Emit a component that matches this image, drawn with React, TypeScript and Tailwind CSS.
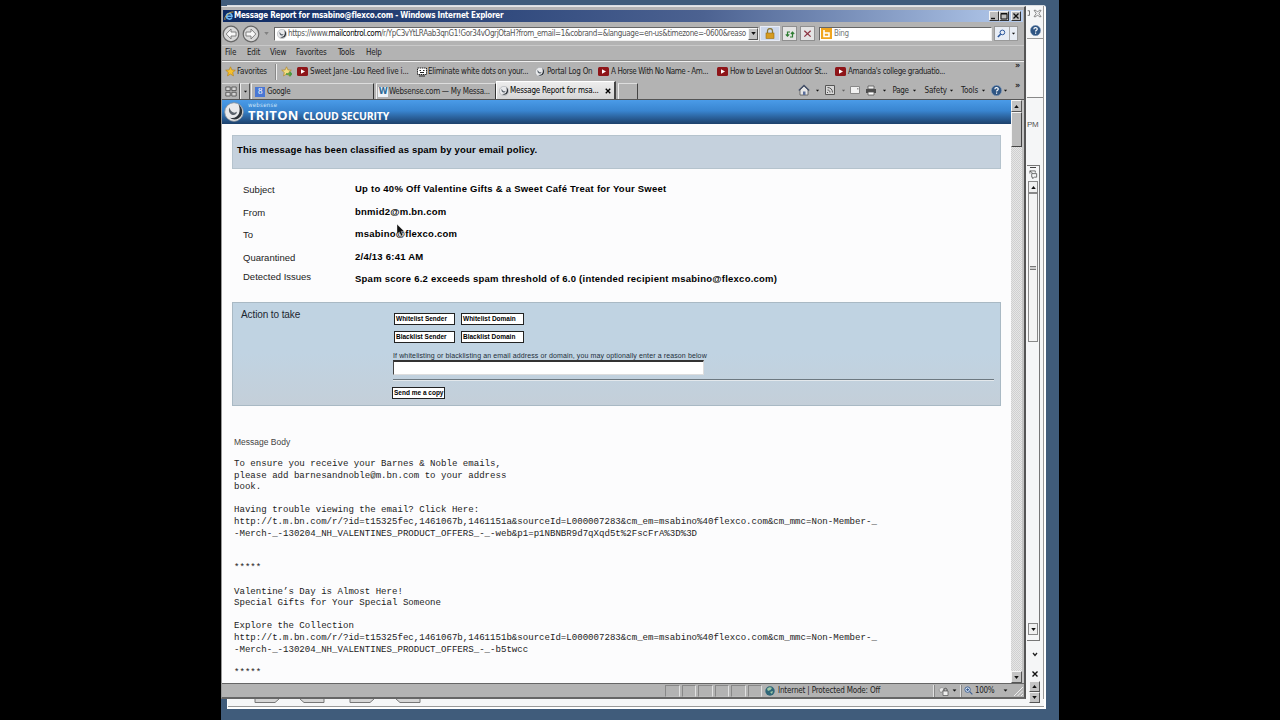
import type { ReactNode } from 'react'
import clsx from 'clsx'

const BODY_LINES = [
  'To ensure you receive your Barnes & Noble emails,',
  'please add barnesandnoble@m.bn.com to your address',
  'book.',
  '',
  'Having trouble viewing the email? Click Here:',
  'http://t.m.bn.com/r/?id=t15325fec,1461067b,1461151a&sourceId=L000007283&cm_em=msabino%40flexco.com&cm_mmc=Non-Member-_',
  '-Merch-_-130204_NH_VALENTINES_PRODUCT_OFFERS_-_-web&p1=p1NBNBR9d7qXqd5t%2FscFrA%3D%3D',
  '',
  '',
  '*****',
  '',
  'Valentine’s Day is Almost Here!',
  'Special Gifts for Your Special Someone',
  '',
  'Explore the Collection',
  'http://t.m.bn.com/r/?id=t15325fec,1461067b,1461151b&sourceId=L000007283&cm_em=msabino%40flexco.com&cm_mmc=Non-Member-_',
  '-Merch-_-130204_NH_VALENTINES_PRODUCT_OFFERS_-_-b5twcc',
  '',
  '*****',
]

function Caret({ className, up }: { className?: string; up?: boolean }) {
  return (
    <svg viewBox="0 0 6 4" className={clsx('h-[3px] w-[5px] shrink-0', className)}>
      <path d={up ? 'M0 4h6L3 0z' : 'M0 0h6L3 4z'} fill="#111" />
    </svg>
  )
}

function Swirl({ className }: { className?: string }) {
  return (
    <svg viewBox="0 0 20 20" className={clsx('shrink-0', className)}>
      <circle cx="10" cy="10" r="9.3" fill="#e9eaec" stroke="#8b9096" strokeWidth="0.8" />
      <path d="M14.5 2.5C18 5 19 9 17.5 13c-2 4.5-8 6-12 2.5 4 1.5 8-.5 9.5-4 1-3 .8-6-.5-9z" fill="#2d3339" />
      <path d="M5.5 5.5c-1.5 3 0 6.5 3 7.5 2.5.5 4.5-1 4.5-3.5-1 1.5-3 1.5-4.5.5S6 7.5 5.5 5.5z" fill="#5b636c" />
    </svg>
  )
}

function YouTube() {
  return (
    <svg viewBox="0 0 11 9" className="h-[9px] w-[11px] shrink-0">
      <rect width="11" height="9" rx="1.5" fill="#8e1519" />
      <path d="M4 2.2v4.6L8 4.5z" fill="#fff" />
    </svg>
  )
}

function HelpBall({ className }: { className?: string }) {
  return (
    <svg viewBox="0 0 12 12" className={clsx('shrink-0', className)}>
      <circle cx="6" cy="6" r="5.6" fill="#2f5583" stroke="#8fa6c0" strokeWidth="0.6" />
      <path d="M4.2 4.7c0-2.6 3.7-2.4 3.7-.3 0 1.4-1.8 1.4-1.8 2.8M6.1 8.3v1.2" fill="none" stroke="#fff" strokeWidth="1.3" />
    </svg>
  )
}

function WinButton({ children }: { children: ReactNode }) {
  return (
    <span className="flex h-[10px] w-[10px] items-center justify-center border border-t-[#f4f4f4] border-r-[#333] border-b-[#333] border-l-[#f4f4f4] bg-[#bdbdbd]">
      <svg viewBox="0 0 8 8" className="size-[8px]" fill="none" stroke="#111">
        {children}
      </svg>
    </span>
  )
}

function ScrollButton({ up, className }: { up?: boolean; className?: string }) {
  return (
    <div
      className={clsx(
        'flex shrink-0 items-center justify-center border border-t-[#f5f5f5] border-r-[#555] border-b-[#555] border-l-[#f5f5f5] bg-[#c4c4c4]',
        className,
      )}
    >
      <Caret up={up} />
    </div>
  )
}

function TitleBar() {
  return (
    <div className="mx-px flex h-[12px] shrink-0 items-center bg-linear-to-r from-[#0d2a63] from-0% via-[#4c6291] via-60% to-[#b5cbed] pl-px">
      <svg viewBox="0 0 10 10" className="size-[10px] shrink-0">
        <path d="M8 6.5C7 9 2.5 8.5 2.5 5.3 2.5 1.8 8 1.5 8 5.2H3" fill="none" stroke="#6db8f2" strokeWidth="1.6" />
        <path d="M1 9C-.5 6 5 .5 9.5 1" fill="none" stroke="#e9b640" strokeWidth="0.8" />
      </svg>
      <span className="flex-1 text-[8px] font-bold tracking-[-0.23px] text-white">
        Message Report for msabino@flexco.com - Windows Internet Explorer
      </span>
      <div className="flex pr-[2px]">
        <WinButton>
          <path d="M1 6.5h4" strokeWidth="1.4" />
        </WinButton>
        <WinButton>
          <path d="M1 1.5h6v5.5H1zM1 2h6" />
        </WinButton>
        <span className="w-[2px]" />
        <WinButton>
          <path d="M1.5 1.5l5 5M6.5 1.5l-5 5" strokeWidth="1.3" />
        </WinButton>
      </div>
    </div>
  )
}

function NavArrow({ flip }: { flip?: boolean }) {
  return (
    <svg viewBox="0 0 18 18" className={clsx('size-[18px] shrink-0', flip && '-scale-x-100')}>
      <circle cx="9" cy="9" r="7.8" fill="#d9d9d9" stroke="#666" strokeWidth="1.2" />
      <path d="M9 4L4.2 9 9 14v-3h5V7H9z" fill="#f8f8f8" stroke="#777" strokeWidth="0.9" />
    </svg>
  )
}

function AddressBar() {
  return (
    <div className="flex h-[23px] shrink-0 items-center">
      <NavArrow />
      <span className="w-[2px]" />
      <NavArrow flip />
      <Caret className="mr-[5px] ml-[4px] opacity-30" />
      <div className="flex h-[14px] w-[485px] items-center border border-t-[#666] border-r-[#eee] border-b-[#eee] border-l-[#666] bg-white pl-[2px]">
        <Swirl className="size-[10px]" />
        <span className="ml-px w-[460px] text-[8px] tracking-[-0.37px] whitespace-nowrap text-[#555]">
          https://www.<span className="text-black">mailcontrol.com</span>
          /r/YpC3vYtLRAab3qnG1!Gor34vOgrjOtaH?from_email=1&amp;cobrand=&amp;language=en-us&amp;timezone=-0600&amp;reaso
        </span>
        <ScrollButton className="h-[12px] w-[10px]" />
      </div>
      <div className="ml-px flex h-[15px] w-[20px] items-center justify-center border border-[#e8ecf5] bg-[#cdd8ec]">
        <svg viewBox="0 0 10 11" className="h-[11px] w-[10px]">
          <path d="M2.5 5V3a2.5 2.5 0 015 0v2" fill="none" stroke="#8a7a3c" strokeWidth="1.3" />
          <rect x="1" y="5" width="8" height="5.5" fill="#d59b22" stroke="#9c6d10" strokeWidth="0.6" />
        </svg>
      </div>
      <div className="ml-[2px] flex h-[15px] w-[15px] items-center justify-center border border-[#8f8f8f] bg-[#e4e4e4]">
        <svg viewBox="0 0 10 10" className="size-[10px]" fill="none" stroke="#2e7d32" strokeWidth="1.2">
          <path d="M5 3H2.5v4M.8 5.3L2.5 7.2 4.2 5.3M5 8h2.5V3.5M5.9 5L7.5 3.2 9.2 5" />
        </svg>
      </div>
      <div className="ml-[3px] flex h-[15px] w-[15px] items-center justify-center border border-[#8f8f8f] bg-[#e4e4e4]">
        <svg viewBox="0 0 10 10" className="size-[9px]" fill="none" stroke="#8c3340" strokeWidth="1.4">
          <path d="M1.5 2l7 6.5M8.5 2L1.5 8.5" />
        </svg>
      </div>
      <div className="ml-[4px] flex h-[14px] w-[173px] items-center border border-t-[#666] border-r-[#eee] border-b-[#eee] border-l-[#666] bg-white pl-px">
        <svg viewBox="0 0 11 11" className="size-[11px]">
          <rect width="11" height="11" fill="#f0a51e" />
          <path d="M3 2v6.5h5V5H3.5" fill="none" stroke="#fff" strokeWidth="1.6" />
        </svg>
        <span className="ml-[2px] text-[8px] tracking-[-0.3px] text-[#777]">Bing</span>
      </div>
      <div className="ml-[2px] flex h-[15px] w-[24px] items-center border border-[#999] bg-[#e8edf5]">
        <svg viewBox="0 0 10 10" className="ml-[2px] size-[9px]" fill="none" stroke="#28559b">
          <circle cx="6" cy="3.8" r="2.6" strokeWidth="1.1" />
          <path d="M4 5.8L1 9" strokeWidth="1.7" />
        </svg>
        <span className="ml-[3px] flex h-full flex-1 items-center justify-center border-l border-[#aaa]">
          <Caret className="scale-75" />
        </span>
      </div>
    </div>
  )
}

function MenuBar() {
  return (
    <div className="flex h-[16px] shrink-0 items-center border-t border-b border-t-[#c9c9c9] border-b-[#888] pl-[3px] text-[8px] tracking-[-0.22px] text-[#222]">
      <span className="w-[22px]">File</span>
      <span className="w-[23px]">Edit</span>
      <span className="w-[26px]">View</span>
      <span className="w-[42px]">Favorites</span>
      <span className="w-[28px]">Tools</span>
      <span>Help</span>
    </div>
  )
}

function Star({ add }: { add?: boolean }) {
  return (
    <svg viewBox="0 0 11 11" className="size-[11px] shrink-0">
      <path
        d="M5.5.8l1.4 3.1 3.4.3-2.6 2.3.8 3.4-3-1.8-3 1.8.8-3.4L.7 4.2l3.4-.3z"
        fill={add ? '#f1dd83' : '#f6c02e'}
        stroke="#b07c14"
        strokeWidth="0.6"
      />
      {add && <path d="M5 8h5M8.5 5.8L10.5 8 8.5 10.2" fill="none" stroke="#4b9a3c" strokeWidth="1.4" />}
    </svg>
  )
}

function FavoritesBar() {
  return (
    <div className="flex h-[20px] shrink-0 items-center border-t border-[#f0f0f0] pl-[3px] text-[8px] tracking-[-0.3px] whitespace-nowrap text-[#222]">
      <Star />
      <span className="ml-px w-[38px]">Favorites</span>
      <span className="mr-[4px] h-[16px] w-[2px] border-l border-[#888] bg-[#eee]" />
      <span className="flex w-[16px]">
        <Star add />
      </span>
      <YouTube />
      <span className="ml-[2px] w-[106px] tracking-[-0.18px]">Sweet Jane -Lou Reed live i...</span>
      <svg viewBox="0 0 12 10" className="h-[10px] w-[12px] shrink-0">
        <rect x="1.5" y="1" width="9" height="6.5" fill="#fff" stroke="#222" strokeDasharray="1.5 0.7" />
        <path d="M3.5 3.5h1.5M7 3.5h1.5M4 5.5h4M3 9h6" stroke="#222" />
      </svg>
      <span className="w-[107px]">Eliminate white dots on your...</span>
      <Swirl className="size-[10px]" />
      <span className="ml-[2px] w-[51px] tracking-[-0.22px]">Portal Log On</span>
      <YouTube />
      <span className="ml-[2px] w-[106px] tracking-[-0.4px]">A Horse With No Name - Am...</span>
      <YouTube />
      <span className="ml-[2px] w-[105px]">How to Level an Outdoor St...</span>
      <YouTube />
      <span className="ml-[2px] flex-1 tracking-[-0.36px]">Amanda's college graduatio...</span>
      <span className="mb-[11px] pr-[4px] text-[9px] font-bold">»</span>
    </div>
  )
}

function TabStrip() {
  return (
    <div className="flex h-[19px] shrink-0 items-end border-b border-[#555] text-[8px] tracking-[-0.35px] whitespace-nowrap text-[#222]">
      <div className="flex h-[16px] w-[18px] items-center justify-center border-t border-r border-t-[#ddd] border-r-[#555]">
        <svg viewBox="0 0 12 11" className="h-[11px] w-[12px]" fill="#d5d5d5" stroke="#555" strokeWidth="0.9">
          <path d="M.8 1h4.4v3.6H.8zM6.8 1h4.4v3.6H6.8zM.8 6.3h4.4V10H.8zM6.8 6.3h4.4V10H6.8z" />
        </svg>
      </div>
      <div className="flex h-[16px] w-[10px] items-center justify-center border-t border-r border-l border-t-[#ddd] border-r-[#555] border-l-[#eee]">
        <Caret className="scale-75" />
      </div>
      <div className="ml-px flex h-[16px] w-[123px] items-center border-t border-r border-l border-t-[#ddd] border-r-[#333] border-l-[#eee] pl-[3px]">
        <span className="flex size-[10px] items-center justify-center bg-[#4a77d4] font-['Liberation_Serif'] text-[9px] text-white">8</span>
        <span className="ml-[2px]">Google</span>
      </div>
      <div className="ml-[2px] flex h-[16px] w-[120px] items-center border-t border-r border-l border-t-[#ddd] border-r-[#333] border-l-[#eee] pl-px">
        <span className="flex size-[10px] items-center justify-center bg-[#eef3f8] text-[9px] font-bold text-[#2c6a96]">W</span>
        <span className="ml-px tracking-[-0.28px]">Websense.com — My Messa...</span>
      </div>
      <div className="flex h-[18px] w-[120px] items-center border-t border-r-2 border-l border-t-white border-r-[#444] border-l-white bg-linear-to-b from-[#ededed] to-[#d6d6d6] pt-px pl-[2px] text-black">
        <Swirl className="size-[10px]" />
        <span className="ml-px flex-1 tracking-[-0.22px]">Message Report for msa...</span>
        <svg viewBox="0 0 8 8" className="mr-[3px] size-[6px]" stroke="#000" strokeWidth="1.8">
          <path d="M1 1l6 6M7 1L1 7" />
        </svg>
      </div>
      <div className="ml-[2px] h-[16px] w-[20px] border-t border-r border-l border-t-[#ddd] border-r-[#444] border-l-[#eee]" />
      <div className="flex h-full flex-1 items-center justify-end pr-[4px]">
        <svg viewBox="0 0 12 12" className="size-[12px]">
          <path d="M2 6v5h8V6L6 2z" fill="#e6e6e6" stroke="#555" strokeWidth="0.8" />
          <path d="M.8 6.5L6 1.5l5.2 5" fill="none" stroke="#44506a" strokeWidth="1.3" />
          <path d="M5 7.5h2.5V11H5z" fill="#5b6e9a" />
        </svg>
        <Caret className="ml-[5px] scale-75" />
        <svg viewBox="0 0 10 10" className="ml-[5px] size-[10px]" fill="none" stroke="#555">
          <path d="M.5.5h9v9h-9z" fill="#d8d8d8" />
          <path d="M2.5 5c1.500 0 2.500 1 2.500 2.500M2.500 2.500c3 0 5 2 5 5" />
          <path d="M2 7h1v1H2z" fill="#555" stroke="none" />
        </svg>
        <Caret className="ml-[6px] scale-75 opacity-50" />
        <svg viewBox="0 0 10 8" className="ml-[4px] h-[8px] w-[10px]">
          <path d="M.5.5h9v7h-9z" fill="#f1f1f1" stroke="#888" />
          <path d="M7 2h1.5v1.5H7z" fill="#999" />
        </svg>
        <svg viewBox="0 0 12 11" className="ml-[5px] h-[11px] w-[12px]">
          <path d="M3 1h6v3H3z" fill="#eee" stroke="#555" strokeWidth="0.8" />
          <path d="M1 4h10v4H1z" fill="#4d4d4d" />
          <path d="M3 7h6v3H3z" fill="#fff" stroke="#555" strokeWidth="0.8" />
        </svg>
        <Caret className="ml-[5px] scale-75" />
        <span className="ml-[6px] pt-px">Page</span>
        <Caret className="ml-[3px] scale-75" />
        <span className="ml-[8px] pt-px tracking-[-0.1px]">Safety</span>
        <Caret className="ml-[2px] scale-75" />
        <span className="ml-[7px] pt-px tracking-[-0.1px]">Tools</span>
        <Caret className="ml-[3px] scale-75" />
        <HelpBall className="ml-[5px] size-[11px]" />
        <Caret className="ml-px scale-75" />
        <span className="mb-[9px] ml-[7px] text-[9px] font-bold">»</span>
      </div>
    </div>
  )
}

function Brand() {
  return (
    <div className="flex h-[24px] shrink-0 items-center bg-linear-to-b from-[#4a9be8] from-0% via-[#3985d0] via-45% to-[#1d416c] pl-[2px] text-white">
      <Swirl className="size-[20px]" />
      <div className="ml-[4px] flex flex-col">
        <span className="h-[6px] text-[6px] leading-[6px] tracking-[0.3px] text-[#cfe4f8]">websense</span>
        <div className="flex items-baseline leading-[14px] font-bold">
          <span className="font-['Open_Sans'] text-[13px] tracking-[0.3px]">TRITON</span>
          <span className="ml-[4px] font-['Open_Sans'] text-[10.5px] tracking-[-0.16px]">CLOUD SECURITY</span>
        </div>
      </div>
    </div>
  )
}

function Field({ label, value, className }: { label: string; value: string; className?: string }) {
  return (
    <div className="flex h-[22.5px] shrink-0">
      <span className={clsx('w-[112px] text-[#222]', className)}>{label}</span>
      <span className="-mt-px font-bold tracking-[0.24px] text-black">{value}</span>
    </div>
  )
}

function ActionButton({ children, className }: { children: ReactNode; className: string }) {
  return (
    <button
      className={clsx(
        "flex h-[12px] items-center border border-[#222] bg-white pl-px font-['Liberation_Sans'] text-[6.5px] font-bold whitespace-nowrap text-black",
        className,
      )}
    >
      {children}
    </button>
  )
}

function ActionPanel() {
  return (
    <div className="flex h-[104px] shrink-0 border border-[#a9b9c4] bg-linear-to-b from-[#c0d3e2] from-50% to-[#c4cfd9]">
      <span className="w-[160px] pt-[6px] pl-[8px] text-[10px] leading-[12px] tracking-[-0.1px] text-[#1c2630]">Action to take</span>
      <div className="flex flex-1 flex-col pt-[10px] pr-[6px]">
        <div className="ml-px grid grid-cols-[61px_64px] gap-x-[6px] gap-y-[6px]">
          <ActionButton className="w-[61px]">Whitelist Sender</ActionButton>
          <ActionButton className="w-[63px]">Whitelist Domain</ActionButton>
          <ActionButton className="w-[61px]">Blacklist Sender</ActionButton>
          <ActionButton className="w-[63px]">Blacklist Domain</ActionButton>
        </div>
        <span className="mt-[9px] h-[8px] text-[7px] leading-[8px] tracking-[0.12px] whitespace-nowrap text-[#222e3a]">
          If whitelisting or blacklisting an email address or domain, you may optionally enter a reason below
        </span>
        <div className="h-[15px] w-[311px] border-t-2 border-r border-b border-l border-t-[#333] border-r-[#ddd] border-b-[#ddd] border-l-[#444] bg-white" />
        <div className="mt-[4px] h-[2px] border-t border-[#6d7880] bg-[#e3e8ec]" />
        <ActionButton className="mt-[6px] -ml-px w-[53px]">Send me a copy</ActionButton>
      </div>
    </div>
  )
}

function Page() {
  return (
    <div className="flex h-full flex-1 flex-col overflow-hidden bg-[#fcfcfd]">
      <Brand />
      <div className="flex flex-col pt-[11px] pr-[10px] pl-[10px] font-['Liberation_Sans']">
        <div className="flex h-[34px] shrink-0 items-center border border-[#b5c3cd] bg-[#c5d1dd] pb-[3px] pl-[4px] text-[9.5px] font-bold tracking-[0.18px] text-black">
          This message has been classified as spam by your email policy.
        </div>
        <div className="flex h-[133px] shrink-0 flex-col pt-[14px] pl-[11px] text-[9.5px] leading-[13px]">
          <Field label="Subject" value="Up to 40% Off Valentine Gifts & a Sweet Café Treat for Your Sweet" />
          <Field label="From" value="bnmid2@m.bn.com" />
          <Field label="To" value="msabino@flexco.com" />
          <Field label="Quarantined" value="2/4/13 6:41 AM" />
          <Field
            label="Detected Issues"
            value="Spam score 6.2 exceeds spam threshold of 6.0 (intended recipient msabino@flexco.com)"
            className="-mt-[3px]"
          />
        </div>
        <ActionPanel />
        <span className="mt-[30px] pl-[2px] text-[8.5px] leading-[12px] text-[#444]">Message Body</span>
        <div className="mt-[10px] flex flex-col pl-[2px] font-['Liberation_Mono'] text-[9.08px] text-[#222]">
          {BODY_LINES.map((line, i) => (
            <span key={i} className="h-[11.6px] leading-[11.6px] whitespace-pre">
              {line}
            </span>
          ))}
        </div>
      </div>
    </div>
  )
}

function PageScroll() {
  return (
    <div className="flex w-[11px] shrink-0 flex-col bg-[repeating-conic-gradient(#d0d0d0_0_25%,#e6e6e6_0_50%)] bg-[length:2px_2px]">
      <ScrollButton up className="h-[12px]" />
      <div className="h-[35px] border border-t-[#f5f5f5] border-r-[#444] border-b-[#444] border-l-[#f5f5f5] bg-[#bcbcbc]" />
      <div className="flex-1" />
      <ScrollButton className="h-[12px]" />
    </div>
  )
}

function StatusBar() {
  return (
    <div className="flex h-[14px] shrink-0 items-center border-t border-[#666] pl-px text-[8px] tracking-[-0.35px] text-[#222]">
      <div className="flex-1" />
      {[0, 1, 2, 3, 4, 5].map((n) => (
        <span key={n} className="mr-[2px] h-[12px] w-[14.5px] border border-t-[#888] border-r-[#e2e2e2] border-b-[#bbb] border-l-[#888]" />
      ))}
      <div className="flex h-[12px] w-[170px] items-center border-r border-[#e2e2e2] pl-px">
        <svg viewBox="0 0 10 10" className="size-[10px]">
          <circle cx="5" cy="5" r="4.7" fill="#2e6678" />
          <path d="M2 3c1-2 4-2 5-1L5.5 4 3 5zM5 6l3-1-1 3z" fill="#9fc9a8" />
        </svg>
        <span className="ml-[3px] tracking-[-0.17px]">Internet | Protected Mode: Off</span>
      </div>
      <div className="flex h-[12px] w-[27px] items-center border-r border-l border-r-[#e2e2e2] border-l-[#888] pl-[3px]">
        <svg viewBox="0 0 11 10" className="h-[10px] w-[11px]">
          <path d="M1 4c1-3 4-3 5-1L3 7z" fill="#e8e8e8" stroke="#777" strokeWidth="0.6" />
          <path d="M5 5h5v4.5H5z" fill="#eee" stroke="#555" strokeWidth="0.7" />
          <path d="M6 5V3.5c0-1.6 3-1.6 3 0V5" fill="none" stroke="#555" />
        </svg>
        <Caret className="ml-[3px] scale-90" />
      </div>
      <div className="flex h-[12px] w-[52px] items-center border-l border-[#888] pl-[2px]">
        <svg viewBox="0 0 10 10" className="size-[9px]" fill="none" stroke="#3a5d92">
          <circle cx="4" cy="4" r="3" fill="#dfe9f5" />
          <path d="M2.5 4h3M4 2.5v3M6.3 6.3L9.3 9.3" strokeWidth="1.2" />
        </svg>
        <span className="ml-[2px] w-[28px]">100%</span>
        <Caret className="scale-90" />
      </div>
      <svg viewBox="0 0 10 10" className="mr-px size-[10px]" stroke="#eee">
        <path d="M1 10l9-9M4.5 10L10 4.5M8 10l2-2" />
      </svg>
    </div>
  )
}

function BrowserWindow() {
  return (
    <div className="absolute top-[6px] left-[221px] flex h-[693px] w-[805px] flex-col border-t border-r-2 border-b-2 border-l border-t-[#e6e6e6] border-r-[#555] border-b-[#666] border-l-[#999] bg-[#b3b3b3] pt-[3px] font-['DejaVu_Sans_Condensed','DejaVu_Sans',sans-serif]">
      <TitleBar />
      <AddressBar />
      <MenuBar />
      <FavoritesBar />
      <TabStrip />
      <div className="flex h-[583px] shrink-0 border-r-2 border-[#c4c4c4]">
        <Page />
        <PageScroll />
      </div>
      <StatusBar />
    </div>
  )
}

function MailWindow() {
  return (
    <div className="absolute top-[5px] left-[227px] flex h-[704px] w-[819px] flex-col items-end rounded-tr-[3px] border border-t-[#d9dde2] border-r-2 border-r-white border-b-2 border-b-white border-l-white bg-[#f5f6f7]">
      <div className="flex min-h-0 w-[18px] flex-1 flex-col border-r border-[#999] pl-px">
        <div className="flex h-[33px] shrink-0 flex-col border-b border-[#999]">
          <svg viewBox="0 0 16 12" className="mt-[2px] h-[11px] w-[16px]" fill="none" stroke="#666">
            <path d="M0 3h2v5H0" />
            <path d="M7 2.5h2l1.8 2 1.8-2h2L12.3 6l2.3 3.5h-2l-1.8-2-1.8 2H7L9.3 6z" strokeWidth="0.8" />
          </svg>
          <HelpBall className="mt-[6px] ml-[3px] size-[11px]" />
        </div>
        <div className="h-[59px] shrink-0 border-b border-[#888] bg-[#fafafa]" />
        <span className="h-[67px] shrink-0 pt-[21px] font-['Liberation_Sans'] text-[8px] tracking-[-0.3px] text-[#555]">PM</span>
        <div className="flex h-[476px] w-[13px] shrink-0 flex-col items-center border-t border-r border-b border-[#777]">
          <div className="mt-px h-px w-[6px] bg-[#444]" />
          <svg viewBox="0 0 10 10" className="my-[2px] size-[9px]" fill="none" stroke="#555" strokeWidth="0.9">
            <path d="M1 4V1h6v2M1 1l3 2.5M3 4h5.5v4H6l-2 1.5V8H3z" />
          </svg>
          <div className="flex h-[12px] w-[10px] shrink-0 items-center justify-center border border-[#888] bg-[#f0f0f0]">
            <Caret up />
          </div>
          <div className="flex h-[149px] w-[10px] shrink-0 items-center justify-center border border-[#888] bg-[#f4f4f4]">
            <span className="h-[4px] w-[6px] border-t border-b border-[#777] bg-[#ccc]" />
          </div>
          <div className="flex-1" />
          <div className="flex h-[12px] w-[10px] shrink-0 items-center justify-center border border-[#888] bg-[#f0f0f0]">
            <Caret />
          </div>
          <div className="h-[5px] shrink-0" />
        </div>
        <div className="flex w-[15px] flex-col items-center">
          <svg viewBox="0 0 6 5" className="mt-[11px] h-[5px] w-[6px] shrink-0" fill="none" stroke="#222" strokeWidth="1.3">
            <path d="M1 1l2 2.5L5 1" />
          </svg>
          <svg viewBox="0 0 6 6" className="mt-[14px] size-[6px] shrink-0" stroke="#111" strokeWidth="1.4">
            <path d="M.5.5l5 5M5.5.5l-5 5" />
          </svg>
          <ScrollButton up className="mt-[4px] h-[11px] w-[11px]" />
          <ScrollButton className="h-[11px] w-[11px]" />
        </div>
      </div>
      <div className="flex h-[8px] w-full shrink-0 items-start border-b border-[#999]">
        <svg viewBox="0 0 200 5" className="h-[5px] w-[200px]" fill="#d6d6d6" stroke="#777">
          <path d="M27 0v3.5h20l4-3.5M72 0l4 3.5h20V0M122 0v3.5h20l4-3.5M168 0l4 3.5h20V0" />
        </svg>
      </div>
    </div>
  )
}

export default function App() {
  return (
    <div className="flex h-[720px] w-[1280px] overflow-hidden bg-black">
      <div className="ml-[221px] h-full w-[838px] bg-[#405c7b]">
        <MailWindow />
        <BrowserWindow />
        <svg viewBox="0 0 10 15" className="absolute top-[224px] left-[397px] h-[14px] w-[9px]">
          <path d="M0 0v11l2.6-2.4L4.5 13l2-1-2-4h3.7z" fill="#111" stroke="#fff" strokeWidth="0.4" />
        </svg>
      </div>
    </div>
  )
}
